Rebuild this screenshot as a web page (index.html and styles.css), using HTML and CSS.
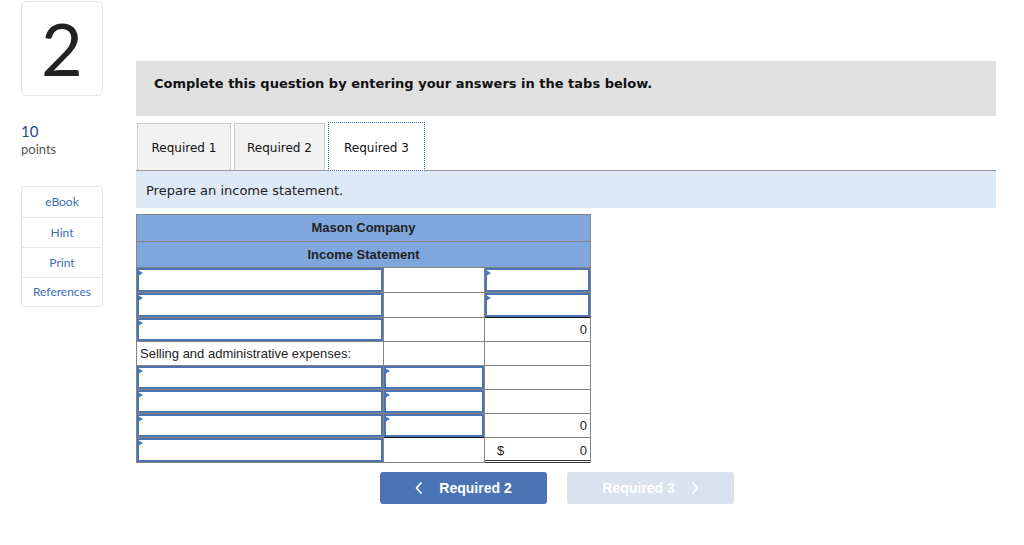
FILE: index.html
```html
<!DOCTYPE html>
<html lang="en">
<head>
<meta charset="utf-8">
<title>Question 2</title>
<link rel="stylesheet" href="styles.css">
</head>
<body>
<div class="page">
  <aside class="side">
    <div class="qnum">2</div>
    <div class="pts">
      <div class="pts-n">10</div>
      <div class="pts-l">points</div>
    </div>
    <ul class="tools">
      <li>eBook</li>
      <li>Hint</li>
      <li>Print</li>
      <li>References</li>
    </ul>
  </aside>
  <main class="main">
    <div class="banner">Complete this question by entering your answers in the tabs below.</div>
    <div class="tabs">
      <div class="tab">Required 1</div>
      <div class="tab">Required 2</div>
      <div class="tab active">Required 3</div>
    </div>
    <div class="instr">Prepare an income statement.</div>

    <div class="stmt">
      <div class="hd">Mason Company</div>
      <div class="hd">Income Statement</div>

      <div class="c"><div class="inp"></div></div>
      <div class="c"></div>
      <div class="c"><div class="inp"></div></div>

      <div class="c"><div class="inp"></div></div>
      <div class="c"></div>
      <div class="c"><div class="inp"></div></div>

      <div class="c"><div class="inp"></div></div>
      <div class="c"></div>
      <div class="c num total-top">0</div>

      <div class="c lbl">Selling and administrative expenses:</div>
      <div class="c"></div>
      <div class="c"></div>

      <div class="c"><div class="inp"></div></div>
      <div class="c"><div class="inp"></div></div>
      <div class="c"></div>

      <div class="c"><div class="inp"></div></div>
      <div class="c"><div class="inp"></div></div>
      <div class="c"></div>

      <div class="c"><div class="inp"></div></div>
      <div class="c sum-bot"><div class="inp"></div></div>
      <div class="c num">0</div>

      <div class="c"><div class="inp"></div></div>
      <div class="c"></div>
      <div class="c num dbl"><span class="cur">$</span><span>0</span></div>
    </div>

    <div class="nav">
      <button class="btn prev" type="button">
        <svg class="chev" width="8" height="12" viewBox="0 0 8 12"><polyline points="6,1 1.5,6 6,11" fill="none" stroke="#fff" stroke-width="1.8" stroke-linecap="round" stroke-linejoin="round"/></svg>
        <span>Required 2</span>
      </button>
      <button class="btn next" type="button">
        <span>Required 3</span>
        <svg class="chev" width="8" height="12" viewBox="0 0 8 12"><polyline points="2,1 6.5,6 2,11" fill="none" stroke="#fff" stroke-width="1.8" stroke-linecap="round" stroke-linejoin="round"/></svg>
      </button>
    </div>
  </main>
</div>
</body>
</html>
```

FILE: styles.css
```css
* { box-sizing: border-box; }
html, body { margin: 0; padding: 0; background: #fff; }
body { font-family: "Liberation Sans", Arial, sans-serif; color: #222; }

.page { display: flex; align-items: flex-start; }

/* sidebar */
.side { width: 82px; margin-left: 21px; padding-top: 1px; font-family: Lato, "Open Sans", sans-serif; }
.qnum {
  height: 95px; border: 1px solid #e6e6e6; border-radius: 6px;
  display: flex; align-items: center; justify-content: center;
  font-size: 72px; line-height: 1; color: #222; font-weight: 400; padding-bottom: 2px;
}
.pts { margin-top: 26px; }
.pts-n { font-size: 15px; color: #1c4a86; line-height: 18px; }
.pts-l { font-size: 13px; color: #555; line-height: 18px; }
.tools {
  list-style: none; margin: 28px 0 0; padding: 0;
  border: 1px solid #e6e6e6; border-radius: 3px;
}
.tools li {
  height: 30px; display: flex; align-items: center; justify-content: center;
  font-size: 12px; color: #3b6db4; border-top: 1px solid #e6e6e6;
}
.tools li:first-child { border-top: 0; height: 30px; padding-bottom: 2px; }
.tools li:last-child { height: 29px; padding-bottom: 2px; }

/* main */
.main { margin-left: 33px; width: 860px; padding-top: 61px; }
.banner {
  height: 55px; background: #e0e0e0; display: flex; align-items: center;
  padding-left: 18px; padding-bottom: 10px;
  font-family: "DejaVu Sans", Verdana, sans-serif; font-weight: bold; font-size: 13px; color: #111;
}
.tabs {
  margin-top: 7px; height: 48px; display: flex; align-items: flex-end; gap: 3px;
  padding-left: 1px; border-bottom: 1px solid #9a9a9a;
}
.tab {
  height: 47px; display: flex; align-items: center; justify-content: center;
  background: #f1f1f1; border: 1px solid #cbcbcb; border-bottom: 0;
  font-family: "DejaVu Sans", Verdana, sans-serif; font-size: 12px; color: #111;
  width: 94px; padding-top: 2px;
}
.tab:nth-child(2) { width: 91px; }
.tab.active {
  width: 97px; height: 49px; margin-bottom: -1px; background: #fff;
  border: 1px dotted #3b6db4; position: relative;
}
.instr {
  height: 37px; background: #dde9f6; display: flex; align-items: center;
  padding-left: 10px; padding-top: 1px; font-family: "DejaVu Sans", Verdana, sans-serif; font-size: 13px; color: #222;
}

/* statement grid */
.stmt {
  margin-top: 6px; width: 455px;
  display: grid;
  grid-template-columns: 246px 100px 105px;
  grid-template-rows: 26px 25px 24px 24px 23px 23px 23px 23px 23px 24px;
  gap: 1px; padding: 1px; background: #858585;
  font-size: 13px;
}
.hd {
  grid-column: 1 / -1; background: #7fa7dd; display: flex; align-items: center; justify-content: center;
  font-weight: bold; color: #222; padding-bottom: 1px;
}
.c { background: #fff; position: relative; display: flex; align-items: center; }
.inp {
  position: absolute; inset: 0; border: 2px solid #4d73b1; background: #fff;
}
.inp::before {
  content: ""; position: absolute; left: -1px; top: 0;
  border-left: 5px solid #4d77bb; border-top: 3px solid transparent; border-bottom: 3px solid transparent;
}
.lbl { padding-left: 3px; color: #222; }
.num { justify-content: flex-end; padding-right: 3px; padding-top: 0; color: #222; }
.total-top { box-shadow: 0 -1px 0 #111; }
.sum-bot { box-shadow: 0 1px 0 #111; }
.dbl {
  justify-content: space-between; padding-left: 12px;
  box-shadow: inset 0 -1px 0 #fff, inset 0 -2px 0 #333, 0 1px 0 #333;
}

/* nav buttons */
.nav { display: flex; gap: 20px; margin-top: 9px; margin-left: 244px; }
.btn {
  width: 167px; height: 32px; border: 0; border-radius: 3px;
  display: flex; align-items: center; justify-content: center; gap: 16px;
  font-family: "Liberation Sans", Arial, sans-serif; font-weight: bold; font-size: 14px; color: #fff;
  padding: 0 0 1px;
}
.prev { background: #4a74b3; }
.next { background: #d9e2ef; }
.chev { display: block; }
```
